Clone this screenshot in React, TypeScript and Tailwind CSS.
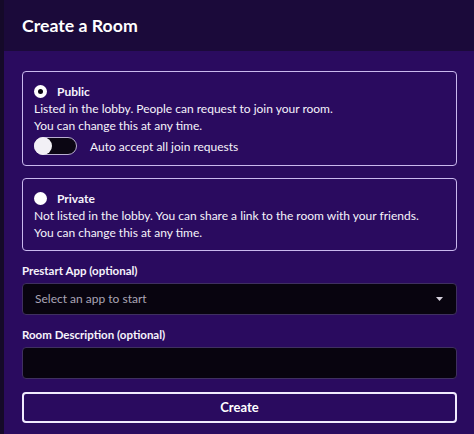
import React from "react";

export default function App() {
  return (
    <div
      className="w-[474px] h-[434px] flex bg-[#2a0b5f] text-[#f6f3fb] overflow-hidden"
      style={{ fontFamily: "Lato, 'Noto Sans', sans-serif" }}
    >
      <div className="w-[4px] shrink-0 bg-[#150a29]" />
      <div className="flex-1 flex flex-col">
        <div className="h-[51px] shrink-0 bg-[#1b0a3a] pl-[18px] flex items-center">
          <h1 className="text-[17.7px] font-bold leading-none text-white">Create a Room</h1>
        </div>
        <div className="flex flex-col pl-[18px] pr-[17px] pt-[20px]">
          {/* Public card */}
          <div className="h-[95px] border border-[#c9b9ee] rounded-[4px] pl-[11px] pr-[11px] pt-[11px] text-[12px] leading-[17px]">
            <div className="flex items-center">
              <span className="w-[13px] h-[13px] rounded-full bg-white flex items-center justify-center">
                <span className="w-[5px] h-[5px] rounded-full bg-[#0a0612]" />
              </span>
              <span className="ml-[10px] font-bold">Public</span>
            </div>
            <div>Listed in the lobby. People can request to join your room.</div>
            <div>You can change this at any time.</div>
            <div className="flex items-center mt-[3px]">
              <span className="w-[43px] h-[18px] rounded-full bg-[#0b0613] border border-[#b9aed0] flex items-center">
                <span className="w-[18px] h-[18px] -ml-px rounded-full bg-[#f2f0f5]" />
              </span>
              <span className="ml-[13px]">Auto accept all join requests</span>
            </div>
          </div>

          {/* Private card */}
          <div className="mt-[12px] h-[73px] border border-[#c9b9ee] rounded-[4px] pl-[11px] pr-[11px] pt-[11px] text-[12px] leading-[17px]">
            <div className="flex items-center">
              <span className="w-[13px] h-[13px] rounded-full bg-white" />
              <span className="ml-[10px] font-bold">Private</span>
            </div>
            <div>Not listed in the lobby. You can share a link to the room with your friends.</div>
            <div>You can change this at any time.</div>
          </div>

          <div className="mt-[12px] text-[11.5px] leading-[16px] font-bold">Prestart App (optional)</div>
          <div className="mt-[4px] h-[32px] bg-[#08040f] border border-[#3f3060] rounded-[4px] flex items-center pl-[12px] pr-[12px]">
            <span className="flex-1 text-[12px] text-[#aaa4b6]">Select an app to start</span>
            <svg width="7" height="4" viewBox="0 0 7 4" className="mr-[1px]">
              <path d="M0 0 L7 0 L3.5 4 Z" fill="#d6d2de" />
            </svg>
          </div>

          <div className="mt-[12px] text-[11.5px] leading-[16px] font-bold">Room Description (optional)</div>
          <div className="mt-[4px] h-[32px] bg-[#08040f] border border-[#3f3060] rounded-[4px]" />

          <button className="mt-[13px] h-[31px] border-2 border-[#f1ebff] rounded-[4px] bg-transparent text-[13px] font-bold text-white flex items-center justify-center">
            Create
          </button>
        </div>
      </div>
    </div>
  );
}
